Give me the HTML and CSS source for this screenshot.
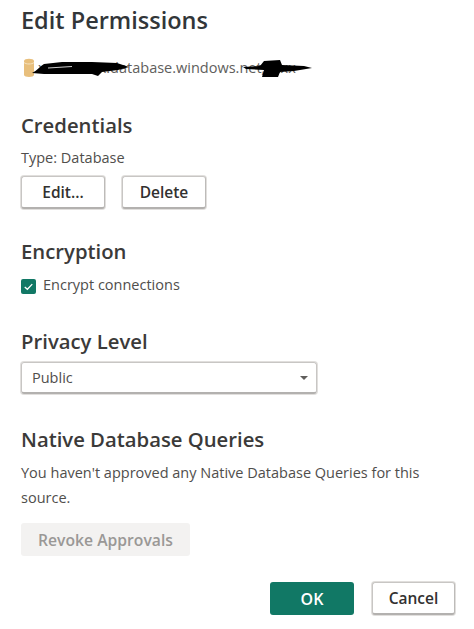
FILE: index.html
```html
<!DOCTYPE html>
<html lang="en">
<head>
<meta charset="utf-8">
<title>Edit Permissions</title>
<link rel="stylesheet" href="styles.css">
</head>
<body>
<main class="dialog">
  <h1 class="title">Edit Permissions</h1>
  <div class="source">
    <svg class="db-icon" viewBox="0 0 12 19" aria-hidden="true"><path d="M1 3c0-3 10-3 10 0v14c0 2.500-10 2.500-10 0z" fill="#e8bf7c"/><path d="M1 4.500c2 2 8 2 10 0" fill="none" stroke="#f6e3c2" stroke-width="1"/></svg>
    <span class="source-text">xxxxxxxxx.database.windows.net;xxxx</span>
    <svg class="scribble" viewBox="0 0 280 20" aria-hidden="true">
      <path d="M0 14C5 12 8 7 12 5L30 3 60 3 85 4 97 8 86 11 70 13 66 17 60 15 40 15 12 15Z" fill="#000"/>
      <path d="M16 9 40 7.500" fill="none" stroke="#fff" stroke-width="0.800"/>
      <path d="M211 8 228 7 232 2 248 1 250 6 272 7 280 9 262 12 248 13 246 18 230 18 232 11 214 10Z" fill="#000"/>
    </svg>
  </div>

  <section class="block credentials">
    <h2 class="heading">Credentials</h2>
    <p class="line type">Type: Database</p>
    <div class="actions">
      <button class="btn">Edit...</button>
      <button class="btn">Delete</button>
    </div>
  </section>

  <section class="block encryption">
    <h2 class="heading">Encryption</h2>
    <div class="check-row">
      <span class="checkbox"><svg viewBox="0 0 16 16" aria-hidden="true"><path d="M4 8.500 6.800 11 12 5.500" fill="none" stroke="#fff" stroke-width="1.400"/></svg></span>
      <span class="line">Encrypt connections</span>
    </div>
  </section>

  <section class="block privacy">
    <h2 class="heading">Privacy Level</h2>
    <div class="select"><span class="line">Public</span><span class="caret"></span></div>
  </section>

  <section class="block native">
    <h2 class="heading">Native Database Queries</h2>
    <p class="line note">You haven't approved any Native Database Queries for this source.</p>
    <button class="btn-disabled">Revoke Approvals</button>
  </section>

  <footer class="footer">
    <button class="btn-primary">OK</button>
    <button class="btn btn-cancel">Cancel</button>
  </footer>
</main>
</body>
</html>
```

FILE: styles.css
```css
* { box-sizing: border-box; }
html, body { margin: 0; padding: 0; background: #fff; }
body { width: 474px; height: 629px; overflow: hidden; font-family: "Open Sans", "Noto Sans", sans-serif; color: #3b3a39; }
.dialog { padding: 5px 0 0 21px; display: flex; flex-direction: column; }
.title { margin: 0; font-size: 23.500px; line-height: 30px; font-weight: 600; color: #323639; }
.source { position: relative; margin-top: 21px; height: 22px; display: flex; align-items: center; gap: 3px; }
.db-icon { width: 12px; height: 19px; margin-left: 2px; flex: none; }
.source-text { font-size: 14.500px; color: #605e5c; white-space: nowrap; }
.scribble { position: absolute; left: 11px; top: 3px; width: 280px; height: 20px; }
.block { display: flex; flex-direction: column; align-items: flex-start; }
.credentials { margin-top: 34px; }
.encryption { margin-top: 29px; }
.privacy { margin-top: 33px; }
.native { margin-top: 32px; }
.heading { margin: 0; font-size: 20.300px; line-height: 27px; font-weight: 600; color: #3b3a39; }
.line { margin: 0; font-size: 14.500px; line-height: 20px; color: #504e4c; }
.type { margin-top: 9px; }
.actions { display: flex; gap: 17px; margin-top: 8px; }
.btn { width: 84px; height: 33px; padding: 0; background: #fff; border: 1px solid #c8c6c4; border-bottom: 2px solid #b3b1af; border-right-color: #bdbbb9; border-radius: 3px; font: 600 15.500px "Open Sans", "Noto Sans", sans-serif; color: #323130; box-shadow: 0 0 0 1px #e1dfdd; }
.check-row { display: flex; align-items: center; gap: 7px; margin-top: 10px; }
.checkbox { width: 15px; height: 15px; border-radius: 2px; background: #117865; display: block; margin-top: 2px; }
.checkbox svg { display: block; width: 15px; height: 15px; }
.select { width: 296px; height: 32px; margin-top: 7px; padding: 0 10px; display: flex; align-items: center; justify-content: space-between; border: 1px solid #c8c6c4; border-bottom: 2px solid #b3b1af; border-radius: 3px; box-shadow: 0 0 0 1px #e1dfdd; }
.caret { width: 0; height: 0; margin-right: -2px; border-left: 4px solid transparent; border-right: 4px solid transparent; border-top: 4px solid #605e5c; }
.note { margin-top: 7px; width: 430px; line-height: 25px; }
.btn-disabled { width: 169px; height: 33px; margin-top: 13px; background: #f3f2f1; border: 0; border-radius: 3px; padding: 0; font: 600 15.700px "Open Sans", "Noto Sans", sans-serif; color: #9a9896; }
.footer { display: flex; justify-content: flex-end; gap: 18px; margin-top: 26px; padding-right: 19px; }
.btn-primary { width: 84px; height: 33px; background: #117865; color: #fff; border: 0; border-radius: 3px; padding: 0; font: 600 16px "Open Sans", "Noto Sans", sans-serif; }
.btn-cancel { width: 83px; }
```
